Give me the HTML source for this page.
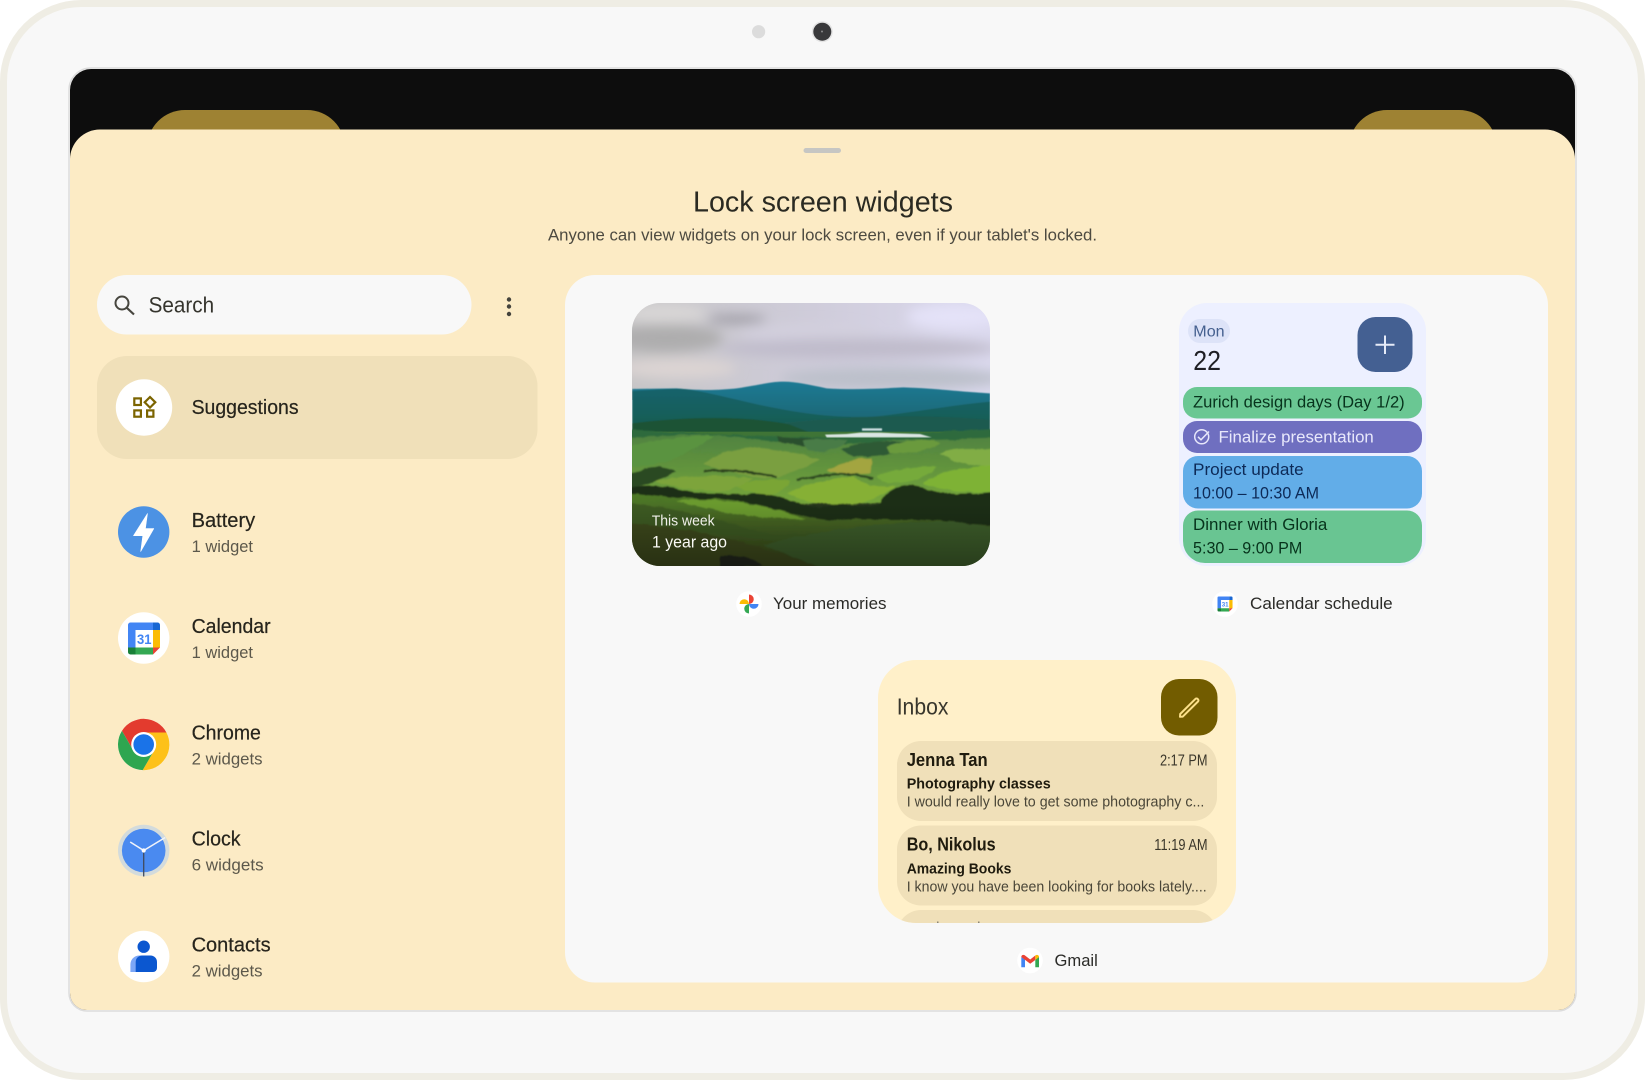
<!DOCTYPE html>
<html lang="en">
<head>
<meta charset="utf-8">
<title>Lock screen widgets</title>
<style>
html,body{margin:0;padding:0;background:#fff;width:1645px;height:1080px;overflow:hidden}
svg{display:block}
text{font-family:"Liberation Sans",sans-serif;white-space:pre}
.m{stroke-width:.2;stroke:currentColor}
</style>
</head>
<body>
<svg width="1645" height="1080" viewBox="0 0 1645 1080" xmlns="http://www.w3.org/2000/svg">
<defs>
<clipPath id="scr"><path d="M91 69H1554a21 21 0 0 1 21 21V993a17 17 0 0 1-17 17H87a17 17 0 0 1-17-17V90a21 21 0 0 1 21-21Z"/></clipPath>
<clipPath id="ph"><rect x="632" y="303" width="358" height="263" rx="28"/></clipPath>
<clipPath id="cal"><rect x="1179" y="303" width="247" height="263" rx="28"/></clipPath>
<clipPath id="gm"><rect x="878" y="660" width="358" height="263" rx="38"/></clipPath>
<filter id="sk" x="-10%" y="-10%" width="120%" height="120%"><feGaussianBlur stdDeviation="18"/></filter>
<filter id="hl" x="-5%" y="-5%" width="110%" height="110%">
  <feTurbulence type="fractalNoise" baseFrequency="0.03" numOctaves="3" seed="4" result="n"/>
  <feDisplacementMap in="SourceGraphic" in2="n" scale="11" xChannelSelector="R" yChannelSelector="G"/>
  <feGaussianBlur stdDeviation="2.200"/>
</filter>
<filter id="rg" x="-5%" y="-5%" width="110%" height="110%"><feGaussianBlur stdDeviation="1.500"/></filter>
<linearGradient id="sky" x1="0" y1="0" x2="1" y2="0"><stop offset="0" stop-color="#c6c5c6"/><stop offset=".5" stop-color="#cfccda"/><stop offset="1" stop-color="#dbd9ee"/></linearGradient>
<linearGradient id="far" x1="0" y1="0" x2="0" y2="1"><stop offset="0" stop-color="#1f7a94"/><stop offset="1" stop-color="#1b5a60"/></linearGradient>
<linearGradient id="near" x1="0" y1="0" x2="0" y2="1"><stop offset="0" stop-color="#17636c"/><stop offset="1" stop-color="#1c5842"/></linearGradient>
<linearGradient id="midg" x1="0" y1="0" x2="0" y2="1"><stop offset="0" stop-color="#4f8240"/><stop offset="1" stop-color="#76a63a"/></linearGradient>
<linearGradient id="fore" x1="0" y1="0" x2="0" y2="1"><stop offset="0" stop-color="#4f7a28"/><stop offset="1" stop-color="#343f1a"/></linearGradient>
<linearGradient id="shade" x1="0" y1="0" x2="0" y2="1"><stop offset="0" stop-color="#000" stop-opacity="0"/><stop offset="1" stop-color="#000" stop-opacity=".35"/></linearGradient>
</defs>

<!-- device -->
<rect x="3.500" y="3.500" width="1638" height="1073" rx="78" fill="#f8f8f8" stroke="#efede4" stroke-width="7"/>
<circle cx="758.600" cy="31.700" r="6.600" fill="#dcdcdc"/>
<circle cx="822.300" cy="31.700" r="10.500" fill="#e4e4e4"/>
<circle cx="822.300" cy="31.700" r="9" fill="#39393b"/>
<circle cx="822" cy="31.500" r="1" fill="#8a8a8a"/>

<!-- screen -->
<path d="M91 68H1554a22 22 0 0 1 22 22V993a18 18 0 0 1-18 18H87a18 18 0 0 1-18-18V90a22 22 0 0 1 22-22Z" fill="none" stroke="#dcdcdc" stroke-width="1.500"/>
<g clip-path="url(#scr)">
  <rect x="70" y="69" width="1505" height="941" fill="#0d0d0d"/>
  <rect x="147" y="110" width="198" height="80" rx="38" fill="#9e8233"/>
  <rect x="1349" y="110" width="148" height="80" rx="38" fill="#9e8233"/>
  <path d="M70 160a30 30 0 0 1 30-30.500H1545a30 30 0 0 1 30 30.500V1010H70Z" fill="#fcebc5"/>
</g>

<rect x="803.500" y="148" width="37.500" height="5" rx="2.500" fill="#c6c6c3"/>

<text x="693" y="211.700" font-size="29" fill="#2a2a22" textLength="260" lengthAdjust="spacingAndGlyphs">Lock screen widgets</text>
<text x="548" y="240.700" font-size="17" fill="#4d4a40" textLength="549" lengthAdjust="spacingAndGlyphs">Anyone can view widgets on your lock screen, even if your tablet's locked.</text>

<!-- search -->
<rect x="97" y="275" width="374.500" height="59.500" rx="29.700" fill="#f8f8f8"/>
<circle cx="122" cy="303" r="6.500" fill="none" stroke="#47463f" stroke-width="2"/>
<path d="M127 308L134 314.500" stroke="#47463f" stroke-width="2.200" fill="none"/>
<text x="148.600" y="312.500" font-size="22" fill="#35342d" textLength="65.500" lengthAdjust="spacingAndGlyphs">Search</text>
<circle cx="509" cy="299.500" r="2.200" fill="#44433c"/><circle cx="509" cy="306.500" r="2.200" fill="#44433c"/><circle cx="509" cy="314" r="2.200" fill="#44433c"/>

<!-- suggestions -->
<rect x="97" y="356" width="440.500" height="103" rx="30" fill="#f0e0b9"/>
<circle cx="144" cy="407.500" r="28.200" fill="#fff"/>
<g fill="none" stroke="#7b6400" stroke-width="2.200">
  <rect x="134.300" y="398.400" width="6.600" height="6.600"/>
  <rect x="134.300" y="410.400" width="6.600" height="6.300"/>
  <rect x="147.100" y="410.400" width="6.300" height="6.300"/>
  <path d="M150 397L155.300 402.300L150 407.600L144.700 402.300Z"/>
</g>
<text x="191.600" y="414" font-size="20" fill="#26241c" color="#26241c" class="m" textLength="107" lengthAdjust="spacingAndGlyphs">Suggestions</text>

<!-- Battery -->
<circle cx="143.700" cy="532" r="25.700" fill="#4c92e4"/>
<path d="M147.500 513.500L133.500 535.700H142.800L140.700 551.500L153.800 528.600H145.400Z" fill="#fff" stroke="#fff" stroke-width=".6" stroke-linejoin="round"/>
<text x="191.600" y="527" font-size="20" fill="#26241c" color="#26241c" class="m" textLength="63.600" lengthAdjust="spacingAndGlyphs">Battery</text>
<text x="191.600" y="552.200" font-size="17" fill="#5c584b" textLength="61.400" lengthAdjust="spacingAndGlyphs">1 widget</text>

<!-- Calendar -->
<circle cx="143.700" cy="638" r="25.700" fill="#fff"/>
<g transform="translate(128 622.500)">
  <path d="M2.500 0H25V7.500H7.500V25H0V2.500A2.500 2.500 0 0 1 2.500 0Z" fill="#4285f4"/>
  <path d="M25 0H29.500A2.500 2.500 0 0 1 32 2.500V7.500H25Z" fill="#1967d2"/>
  <rect x="25" y="7.500" width="7" height="17.500" fill="#fbbc04"/>
  <rect x="7.500" y="25" width="17.500" height="7" fill="#34a853"/>
  <path d="M0 25H7.500V32H2.500A2.500 2.500 0 0 1 0 29.500Z" fill="#188038"/>
  <path d="M25 25H32L25 32Z" fill="#ea4335"/>
  <text x="9" y="21.500" font-size="14" font-weight="bold" fill="#4285f4" textLength="14.500" lengthAdjust="spacingAndGlyphs">31</text>
</g>
<text x="191.600" y="633" font-size="20" fill="#26241c" color="#26241c" class="m" textLength="79" lengthAdjust="spacingAndGlyphs">Calendar</text>
<text x="191.600" y="658" font-size="17" fill="#5c584b" textLength="61.400" lengthAdjust="spacingAndGlyphs">1 widget</text>

<!-- Chrome -->
<g transform="translate(143.700 744.500)">
  <circle r="25.700" fill="#fff"/>
  <path d="M0-12L22.730-12A25.700 25.700 0 0 0-21.750-13.680L-10.390 6A12 12 0 0 1 0-12Z" fill="#e33b2e"/>
  <path transform="rotate(120)" d="M0-12L22.730-12A25.700 25.700 0 0 0-21.750-13.680L-10.390 6A12 12 0 0 1 0-12Z" fill="#fdc119"/>
  <path transform="rotate(240)" d="M0-12L22.730-12A25.700 25.700 0 0 0-21.750-13.680L-10.390 6A12 12 0 0 1 0-12Z" fill="#2ea650"/>
  <circle r="12.500" fill="#fff"/>
  <circle r="10.300" fill="#1a73e8"/>
</g>
<text x="191.600" y="739.500" font-size="20" fill="#26241c" color="#26241c" class="m" textLength="69.300" lengthAdjust="spacingAndGlyphs">Chrome</text>
<text x="191.600" y="764.500" font-size="17" fill="#5c584b" textLength="71" lengthAdjust="spacingAndGlyphs">2 widgets</text>

<!-- Clock -->
<g transform="translate(143.700 850.500)">
  <circle r="25.700" fill="#d3dbdc"/>
  <circle r="21.800" fill="#4a8af0"/>
  <path d="M0 0V26" stroke="#414a5c" stroke-width="1.300"/>
  <path d="M0 0L-13.500-8.500" stroke="#f0f3fa" stroke-width="1.600"/>
  <path d="M0 0L21.500-13" stroke="#f0f3fa" stroke-width="1.600"/>
  <circle r="2.100" fill="#fff"/>
</g>
<text x="191.600" y="845.500" font-size="20" fill="#26241c" color="#26241c" class="m" textLength="49" lengthAdjust="spacingAndGlyphs">Clock</text>
<text x="191.600" y="870.700" font-size="17" fill="#5c584b" textLength="72" lengthAdjust="spacingAndGlyphs">6 widgets</text>

<!-- Contacts -->
<circle cx="143.700" cy="956.500" r="25.700" fill="#fff"/>
<path d="M130.400 972V964.500A9 9 0 0 1 139.400 955.500H146V972H134Z" fill="#7ba6f6"/>
<path d="M135.700 972V962A6.500 6.500 0 0 1 142.200 955.500H150.500A6.500 6.500 0 0 1 157 962V968A4 4 0 0 1 153 972Z" fill="#0b57d0"/>
<circle cx="143.700" cy="946.700" r="6.200" fill="#0b57d0"/>
<text x="191.600" y="951.500" font-size="20" fill="#26241c" color="#26241c" class="m" textLength="79" lengthAdjust="spacingAndGlyphs">Contacts</text>
<text x="191.600" y="976.500" font-size="17" fill="#5c584b" textLength="71" lengthAdjust="spacingAndGlyphs">2 widgets</text>

<!-- right panel -->
<rect x="565" y="275" width="983" height="707.500" rx="30" fill="#f8f8f8"/>

<!-- photo -->
<g clip-path="url(#ph)">
  <g transform="translate(620 290) scale(.33333)">
    <rect x="30" y="30" width="1090" height="300" fill="url(#sky)"/>
    <g filter="url(#sk)">
      <ellipse cx="130" cy="70" rx="130" ry="30" fill="#d8d6d6"/>
      <ellipse cx="140" cy="145" rx="170" ry="42" fill="#aeadae"/>
      <ellipse cx="350" cy="88" rx="90" ry="12" fill="#98969f"/>
      <ellipse cx="170" cy="235" rx="180" ry="30" fill="#dcd4d3"/>
      <ellipse cx="560" cy="130" rx="200" ry="25" fill="#d3d0de"/>
      <ellipse cx="720" cy="175" rx="420" ry="30" fill="#bfbbcb"/>
      <ellipse cx="820" cy="265" rx="340" ry="35" fill="#bcc0ca"/>
      <ellipse cx="1000" cy="80" rx="140" ry="38" fill="#e4e2f8"/>
    </g>
    <g filter="url(#rg)">
      <path d="M37 297L170 295C250 303 300 300 350 295C420 285 450 275 490 275C530 275 570 285 620 295C700 300 780 296 850 292C950 295 1020 305 1110 310V470H37Z" fill="url(#far)"/>
      <path d="M37 303C100 300 150 295 190 297C260 305 330 325 420 345C520 365 620 385 760 380C850 372 1000 345 1110 335V480H37Z" fill="url(#near)"/>
      <path d="M37 400C200 380 420 370 600 425L37 460Z" fill="#1a5236"/>
      <path d="M500 400C650 380 900 370 1110 390V440L600 440Z" fill="#1c5a50"/>
    </g>
    <!-- undisplaced base so no gaps appear -->
    <rect x="30" y="425" width="1090" height="180" fill="#3f7436"/>
    <rect x="30" y="590" width="1090" height="125" fill="#26361c"/>
    <rect x="30" y="690" width="1090" height="145" fill="#3c4e20"/>
    <g filter="url(#hl)">
      <path d="M20 420C150 425 300 435 460 440C650 445 900 430 1130 415V500H20Z" fill="#2f6a3c"/>
      <path d="M470 440C540 445 620 445 680 450L660 490L480 480Z" fill="#2b4f2e"/>
      <path d="M20 445C100 440 200 430 280 435C350 445 450 450 520 465C650 475 800 445 900 450C1000 455 1060 440 1130 445V640H20Z" fill="url(#midg)"/>
      <path d="M550 450C600 445 660 445 680 450C670 475 620 490 560 480Z" fill="#4a7c46"/>
      <path d="M660 480C720 450 800 450 880 460C860 490 780 500 700 500Z" fill="#2f5a36"/>
      <path d="M800 470C860 450 920 445 960 460C920 485 860 490 810 490Z" fill="#6a9a3e"/>
      <path d="M20 470C100 450 200 435 280 435C240 470 170 510 120 520C80 530 60 530 20 530Z" fill="#5a933f"/>
      <path d="M250 520C300 485 350 475 390 472C470 480 540 490 600 510C540 540 470 570 420 565C360 555 300 540 250 520Z" fill="#7a9f40"/>
      <path d="M620 545C650 520 700 505 755 505L750 550C710 555 660 550 620 545Z" fill="#a3a53f"/>
      <path d="M960 490C1000 475 1050 472 1130 480V530C1050 530 1000 515 960 490Z" fill="#81ad45"/>
      <path d="M910 580C960 540 1050 530 1130 525V605C1030 610 960 600 910 580Z" fill="#7eb236"/>
      <path d="M770 560C820 535 880 530 950 530C920 560 880 580 830 580C800 580 780 575 770 560Z" fill="#76aa3a"/>
      <path d="M500 610C560 580 640 565 700 560C740 590 770 590 830 590C790 610 730 650 690 640C620 650 560 640 500 610Z" fill="#86b036"/>
      <path d="M340 590C390 570 450 565 510 570C500 590 480 610 450 615C410 610 370 600 340 590Z" fill="#7aa535"/>
      <path d="M100 575C180 555 300 555 400 565C370 585 340 600 300 605C220 600 150 590 100 575Z" fill="#7da43a"/>
      <path d="M20 560C70 530 110 520 170 545C120 570 80 590 20 595Z" fill="#2a4a24"/>
      <path d="M250 545C320 535 400 550 470 560" stroke="#2a3f1f" stroke-width="8" fill="none"/>
      <path d="M530 570C600 555 680 545 760 565" stroke="#2f4a22" stroke-width="7" fill="none"/>
      <path d="M20 595C100 580 150 590 220 608L380 612C430 600 500 630 600 655C680 628 740 660 780 640C800 590 870 570 930 600C1000 620 1060 610 1130 605V725H20Z" fill="#1f2f19"/>
      <path d="M20 610C120 615 200 630 300 625C430 640 560 690 650 692C720 682 800 692 900 688C980 692 1050 705 1130 710V840H20Z" fill="url(#fore)"/>
      <path d="M170 632C280 620 420 640 560 686C420 692 280 665 170 632Z" fill="#6a9a2e"/>
      <path d="M20 640C160 650 300 690 460 735C620 730 780 705 900 690L1130 708V760L700 780L20 700Z" fill="#3e5a20"/>
      <path d="M430 765C600 720 800 692 1000 695L1130 712V840H620Z" fill="#3d5d29"/>
      <path d="M20 700C200 710 380 750 620 840H20Z" fill="#3c4a1e"/>
      <path d="M300 800C340 790 390 800 430 825L300 840Z" fill="#23281a"/>
    </g>
    <g filter="url(#rg)">
      <rect x="726" y="415" width="60" height="7" fill="#cfe0e2"/>
      <path d="M615 434L680 432L720 428L780 428L830 430L900 432L935 442L620 442Z" fill="#dbe6e4"/>
    </g>
    <rect x="30" y="640" width="1090" height="195" fill="url(#shade)"/>
  </g>
  <text x="651.700" y="525.300" font-size="15" fill="#f0f0ea" textLength="63" lengthAdjust="spacingAndGlyphs">This week</text>
  <text x="652" y="547.300" font-size="17" fill="#fafaf5" textLength="75" lengthAdjust="spacingAndGlyphs">1 year ago</text>
</g>

<!-- Photos label -->
<g transform="translate(749 604)">
  <circle r="12.800" fill="#fff"/>
  <path d="M-9.500 0A4.750 4.750 0 0 1 0 0Z" fill="#fbbc04"/>
  <path d="M0-9.500A4.750 4.750 0 0 1 0 0Z" fill="#ea4335"/>
  <path d="M9.500 0A4.750 4.750 0 0 1 0 0Z" fill="#4285f4"/>
  <path d="M0 9.500A4.750 4.750 0 0 1 0 0Z" fill="#34a853"/>
</g>
<text x="773" y="609" font-size="17" fill="#2b2b28" textLength="113.500" lengthAdjust="spacingAndGlyphs">Your memories</text>

<!-- calendar widget -->
<g clip-path="url(#cal)">
  <rect x="1179" y="303" width="247" height="263" fill="#edf0ff"/>
  <rect x="1188" y="319" width="42" height="24" rx="12" fill="#dde3f8"/>
  <text x="1193.300" y="336.700" font-size="16" fill="#45608f" textLength="31.300" lengthAdjust="spacingAndGlyphs">Mon</text>
  <text x="1193.300" y="370" font-size="28" fill="#1f1f24" textLength="27.700" lengthAdjust="spacingAndGlyphs">22</text>
  <rect x="1357.500" y="317" width="55" height="55" rx="18" fill="#446092"/>
  <path d="M1385 335.500V354M1375.500 344.700H1394.500" stroke="#e6ebf8" stroke-width="2" fill="none"/>
  <rect x="1183" y="387" width="239" height="31.500" rx="14" fill="#6ac793"/>
  <rect x="1183" y="421" width="239" height="32" rx="14" fill="#6f6fc0"/>
  <rect x="1183" y="456" width="239" height="52.500" rx="15" fill="#62ade8"/>
  <path d="M1198 510.500H1407A15 15 0 0 1 1422 525.500V541A22 22 0 0 1 1400 563H1205A22 22 0 0 1 1183 541V525.500A15 15 0 0 1 1198 510.500Z" fill="#69c592"/>
  <text x="1193" y="407.700" font-size="16.500" fill="#07331c" textLength="211.700" lengthAdjust="spacingAndGlyphs">Zurich design days (Day 1/2)</text>
  <circle cx="1201.700" cy="436.800" r="7" fill="none" stroke="#e6e6fa" stroke-width="1.500"/>
  <path d="M1198 436.800L1201 439.800L1209 431.500" fill="none" stroke="#e6e6fa" stroke-width="1.500"/>
  <text x="1218.500" y="442.300" font-size="16.500" fill="#e8e8fb" textLength="155.300" lengthAdjust="spacingAndGlyphs">Finalize presentation</text>
  <text x="1193" y="475" font-size="16.500" fill="#0d2a57" textLength="110.700" lengthAdjust="spacingAndGlyphs">Project update</text>
  <text x="1193" y="498.300" font-size="16.500" fill="#0d2a57" textLength="126" lengthAdjust="spacingAndGlyphs">10:00 – 10:30 AM</text>
  <text x="1193" y="530" font-size="16.500" fill="#07331c" textLength="134.300" lengthAdjust="spacingAndGlyphs">Dinner with Gloria</text>
  <text x="1193" y="553.300" font-size="16.500" fill="#07331c" textLength="109.300" lengthAdjust="spacingAndGlyphs">5:30 – 9:00 PM</text>
</g>

<!-- calendar label -->
<circle cx="1225" cy="604" r="12.800" fill="#fff"/>
<g transform="translate(1217.500 596.500) scale(.47)">
  <path d="M2.500 0H25V7.500H7.500V25H0V2.500A2.500 2.500 0 0 1 2.500 0Z" fill="#4285f4"/>
  <path d="M25 0H29.500A2.500 2.500 0 0 1 32 2.500V7.500H25Z" fill="#1967d2"/>
  <rect x="25" y="7.500" width="7" height="17.500" fill="#fbbc04"/>
  <rect x="7.500" y="25" width="17.500" height="7" fill="#34a853"/>
  <path d="M0 25H7.500V32H2.500A2.500 2.500 0 0 1 0 29.500Z" fill="#188038"/>
  <path d="M25 25H32L25 32Z" fill="#ea4335"/>
  <text x="9" y="21.500" font-size="14" font-weight="bold" fill="#4285f4" textLength="14.500" lengthAdjust="spacingAndGlyphs">31</text>
</g>
<text x="1250" y="609" font-size="17" fill="#2b2b28" textLength="142.700" lengthAdjust="spacingAndGlyphs">Calendar schedule</text>

<!-- gmail widget -->
<g clip-path="url(#gm)">
  <rect x="878" y="660" width="358" height="263" fill="#fff0c9"/>
  <text x="896.700" y="714.300" font-size="23" fill="#38362c" textLength="51.700" lengthAdjust="spacingAndGlyphs">Inbox</text>
  <rect x="1161" y="679" width="56.500" height="56.500" rx="18" fill="#725c00"/>
  <path d="M1180 716.800L1180.200 714L1195.400 698.900C1196 698.300 1197 698.300 1197.600 698.900L1198 699.300C1198.600 699.900 1198.600 700.900 1198 701.500L1182.800 716.600Z" fill="none" stroke="#fce08a" stroke-width="2" stroke-linejoin="round"/>
  <rect x="897" y="741" width="320" height="80" rx="24" fill="#f0e0b9"/>
  <rect x="897" y="825.500" width="320" height="80" rx="24" fill="#f0e0b9"/>
  <rect x="897" y="910" width="320" height="60" rx="24" fill="#f0e0b9"/>
  <rect x="937" y="921.500" width="1.500" height="2" fill="#8a8474"/><rect x="978" y="921.500" width="1.500" height="2" fill="#8a8474"/>
  <text x="906.700" y="766" font-size="18" font-weight="bold" fill="#1f1b0e" textLength="81" lengthAdjust="spacingAndGlyphs">Jenna Tan</text>
  <text x="1160" y="765.300" font-size="15.500" fill="#3a362a" textLength="47.500" lengthAdjust="spacingAndGlyphs">2:17 PM</text>
  <text x="906.700" y="788.700" font-size="15" font-weight="bold" fill="#1f1b0e" textLength="144" lengthAdjust="spacingAndGlyphs">Photography classes</text>
  <text x="906.700" y="806.700" font-size="15" fill="#4a4638" textLength="297.700" lengthAdjust="spacingAndGlyphs">I would really love to get some photography c...</text>
  <text x="906.700" y="850.700" font-size="18" font-weight="bold" fill="#1f1b0e" textLength="89" lengthAdjust="spacingAndGlyphs">Bo, Nikolus</text>
  <text x="1154.300" y="850" font-size="15.500" fill="#3a362a" textLength="53.300" lengthAdjust="spacingAndGlyphs">11:19 AM</text>
  <text x="906.700" y="873.700" font-size="15" font-weight="bold" fill="#1f1b0e" textLength="104.700" lengthAdjust="spacingAndGlyphs">Amazing Books</text>
  <text x="906.700" y="891.700" font-size="15" fill="#4a4638" textLength="300" lengthAdjust="spacingAndGlyphs">I know you have been looking for books lately....</text>
</g>

<!-- gmail label -->
<circle cx="1030" cy="960.500" r="12.800" fill="#fff"/>
<path d="M1021.300 967.300V957L1025 959.500V967.300Z" fill="#4285f4"/>
<path d="M1035.300 967.300V959.500L1039 957V967.300Z" fill="#34a853"/>
<path d="M1021.300 957C1021.300 955 1023.500 954.300 1025 955.500L1030.200 959.500L1035.300 955.500V960L1030.200 963.800L1021.300 957Z" fill="#ea4335"/>
<path d="M1035.300 955.500C1036.800 954.300 1039 955 1039 957L1035.300 960Z" fill="#fbbc04"/>
<text x="1054.500" y="966" font-size="17" fill="#2b2b28" textLength="43.300" lengthAdjust="spacingAndGlyphs">Gmail</text>
</svg>
</body>
</html>
